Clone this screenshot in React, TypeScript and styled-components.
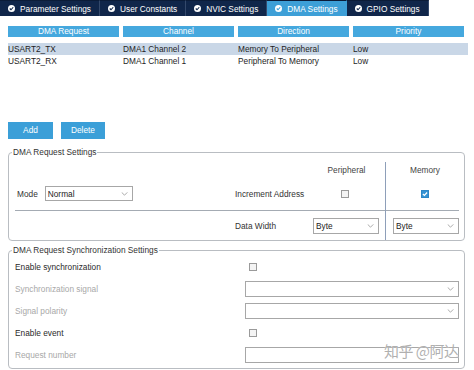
import React from 'react';
import styled, {createGlobalStyle} from "styled-components";

const GlobalStyle = createGlobalStyle`
  html, body {
    margin: 0;
    padding: 0;
    background: #fff;
  }

  body {
    font-family: "Liberation Sans", Arial, sans-serif;
    font-size: 8.3px;
    color: #222;
  }
`

const Page = styled.div`
  position: relative;
  width: 474px;
  height: 370px;
  overflow: hidden;
  background: #fff;
`

const TabBar = styled.div`
  display: flex;
  height: 16px;
`

const Tab = styled.div<{ $active?: boolean }>`
  display: flex;
  align-items: center;
  gap: 5px;
  padding: 0 8px;
  height: 100%;
  color: #fff;
  white-space: nowrap;
  background: ${p => p.$active ? '#3d9fd7' : '#10264a'};
  border-right: 1px solid ${p => p.$active ? '#3d9fd7' : '#34496b'};
  border-top: 1px solid #0b1c38;
  box-sizing: border-box;
`

const TabIcon = styled.span<{ $active?: boolean }>`
  display: flex;
  align-items: center;
  justify-content: center;
  width: 7px;
  height: 7px;
  border-radius: 50%;
  background: #fff;

  svg {
    width: 5px;
    height: 5px;
    stroke: ${p => p.$active ? '#3d9fd7' : '#10264a'};
  }
`

const Table = styled.div`
  display: grid;
  grid-template-columns: repeat(4, 111px);
  column-gap: 4px;
  margin: 10px 0 0 8px;
  width: 457px;
`

const HeadCell = styled.div`
  height: 11px;
  line-height: 11px;
  background: #45a8de;
  color: #fff;
  text-align: center;
  margin-bottom: 6px;
`

const Row = styled.div<{ $striped?: boolean }>`
  display: contents;

  & > div {
    background: ${p => p.$striped ? '#c9d7e7' : '#fff'};
  }
`

const Cell = styled.div`
  height: 12px;
  line-height: 12px;
  white-space: nowrap;
  color: #1e1e1e;
  margin-right: -4px;
  padding-right: 4px;
`

const Buttons = styled.div`
  display: flex;
  gap: 8px;
  margin: 55px 0 0 8px;
`

const Button = styled.div<{ $width: number }>`
  width: ${p => p.$width}px;
  height: 17px;
  line-height: 17px;
  background: #3b9fd8;
  color: #fff;
  text-align: center;
`

const Group = styled.div<{ $top: number }>`
  margin: ${p => p.$top}px 9px 0 8px;
  border: 1px solid #b9bdc2;
  border-radius: 4px;
`

const Legend = styled.div`
  width: fit-content;
  margin: -6px 0 0 3px;
  padding: 0 1px;
  height: 10px;
  line-height: 10px;
  background: #fff;
  color: #333;
`

const RequestGrid = styled.div`
  display: grid;
  grid-template-columns: 226px 77px 73px 1px 78px;
  grid-template-rows: 15px 33px 1px 29px;
  margin-top: 5px;
  align-items: center;
`

const VLine = styled.div`
  grid-column: 4;
  grid-row: 1 / 5;
  align-self: stretch;
  background: #8e9fb9;
`

const HLine = styled.div`
  grid-column: 1 / -1;
  grid-row: 3;
  height: 1px;
  margin: 0 5px 0 6px;
  background: #a4abb3;
`

const ColHead = styled.div<{ $col: number; $shift?: number }>`
  grid-column: ${p => p.$col};
  grid-row: 1;
  text-align: center;
  color: #444;
  padding-right: ${p => p.$shift || 0}px;
`

const Field = styled.div<{ $col: number; $row: number; $pad?: number }>`
  grid-column: ${p => p.$col};
  grid-row: ${p => p.$row};
  display: flex;
  align-items: center;
  gap: 7px;
  padding-left: ${p => p.$pad || 0}px;
  white-space: nowrap;
  color: #333;
`

const CheckCell = styled.div<{ $col: number; $shift?: number }>`
  grid-column: ${p => p.$col};
  grid-row: 2;
  display: flex;
  justify-content: center;
  padding-right: ${p => p.$shift || 0}px;
`

const Box = styled.span<{ $checked?: boolean }>`
  display: flex;
  align-items: center;
  justify-content: center;
  width: 8px;
  height: 8px;
  box-sizing: border-box;
  border: 1px solid ${p => p.$checked ? '#2c86c6' : '#9a9a9a'};
  background: ${p => p.$checked ? '#3593d3' : '#f4f4f4'};

  svg {
    width: 6px;
    height: 6px;
  }
`

const SelectBox = styled.div<{ $width?: number; $height?: number }>`
  display: flex;
  align-items: center;
  justify-content: space-between;
  box-sizing: border-box;
  width: ${p => p.$width ? `${p.$width}px` : '100%'};
  height: ${p => p.$height || 16}px;
  padding: 0 4px 0 2px;
  border: 1px solid #a7a7a7;
  background: #fff;
  color: #222;

  svg {
    width: 7px;
    height: 4px;
  }
`

const SyncGrid = styled.div`
  display: grid;
  grid-template-columns: 236px 214px;
  grid-auto-rows: 22px;
  align-items: center;
  margin: 1px 0 2px;
`

const SyncLabel = styled.div<{ $disabled?: boolean }>`
  padding-left: 6px;
  color: ${p => p.$disabled ? '#a8a8a8' : '#2a2a2a'};
`

const SyncControl = styled.div`
  display: flex;
  align-items: center;

  & > span {
    margin-left: 4px;
  }
`

const Watermark = styled.div`
  position: absolute;
  left: 384px;
  top: 340px;
  font-family: "Noto Sans CJK SC", sans-serif;
  font-size: 15px;
  letter-spacing: -0.5px;
  color: rgba(150, 150, 150, 0.75);
  text-shadow: 0 0 1px #fff;
  white-space: nowrap;
`

const Check: React.FC = () => (
  <svg viewBox="0 0 10 10" fill="none" strokeWidth={2.2}>
    <polyline points="1.5,5 4,7.5 8.5,2.5"/>
  </svg>
)

const Chevron: React.FC = () => (
  <svg viewBox="0 0 8 5" fill="none" stroke="#8a8a8a" strokeWidth={0.9}>
    <polyline points="0.5,0.5 4,4 7.5,0.5"/>
  </svg>
)

const Checkbox: React.FC<{ checked?: boolean }> = ({checked}) => (
  <Box $checked={checked}>
    {checked && (
      <svg viewBox="0 0 10 10" fill="none" stroke="#fff" strokeWidth={2}>
        <polyline points="1.5,5 4,7.5 8.5,2.5"/>
      </svg>
    )}
  </Box>
)

const Select: React.FC<{ value?: string; width?: number; height?: number }> = ({value, width, height}) => (
  <SelectBox $width={width} $height={height}>
    <span>{value}</span>
    <Chevron/>
  </SelectBox>
)

const tabs = ['Parameter Settings', 'User Constants', 'NVIC Settings', 'DMA Settings', 'GPIO Settings']

const requests = [
  ['USART2_TX', 'DMA1 Channel 2', 'Memory To Peripheral', 'Low'],
  ['USART2_RX', 'DMA1 Channel 1', 'Peripheral To Memory', 'Low'],
]

const App: React.FC = () => {
  return (
    <Page>
      <GlobalStyle/>
      <TabBar>
        {tabs.map(t => (
          <Tab key={t} $active={t === 'DMA Settings'}>
            <TabIcon $active={t === 'DMA Settings'}><Check/></TabIcon>
            {t}
          </Tab>
        ))}
      </TabBar>

      <Table>
        {['DMA Request', 'Channel', 'Direction', 'Priority'].map(h => (
          <HeadCell key={h}>{h}</HeadCell>
        ))}
        {requests.map((r, i) => (
          <Row key={r[0]} $striped={i === 0}>
            {r.map((c, j) => (
              <Cell key={j}>{c}</Cell>
            ))}
          </Row>
        ))}
      </Table>

      <Buttons>
        <Button $width={45}>Add</Button>
        <Button $width={44}>Delete</Button>
      </Buttons>

      <Group $top={13}>
        <Legend>DMA Request Settings</Legend>
        <RequestGrid>
          <ColHead $col={3} $shift={4}>Peripheral</ColHead>
          <ColHead $col={5}>Memory</ColHead>

          <Field $col={1} $row={2} $pad={8}>
            Mode
            <Select value="Normal" width={88} height={15}/>
          </Field>
          <Field $col={2} $row={2}>Increment Address</Field>
          <CheckCell $col={3} $shift={8}><Checkbox/></CheckCell>
          <CheckCell $col={5}><Checkbox checked/></CheckCell>

          <HLine/>

          <Field $col={2} $row={4}>Data Width</Field>
          <Field $col={3} $row={4} $pad={1}><Select value="Byte" width={66}/></Field>
          <Field $col={5} $row={4} $pad={7}><Select value="Byte" width={66}/></Field>

          <VLine/>
        </RequestGrid>
      </Group>

      <Group $top={9}>
        <Legend>DMA Request Synchronization Settings</Legend>
        <SyncGrid>
          <SyncLabel>Enable synchronization</SyncLabel>
          <SyncControl><Checkbox/></SyncControl>
          <SyncLabel $disabled>Synchronization signal</SyncLabel>
          <SyncControl><Select/></SyncControl>
          <SyncLabel $disabled>Signal polarity</SyncLabel>
          <SyncControl><Select/></SyncControl>
          <SyncLabel>Enable event</SyncLabel>
          <SyncControl><Checkbox/></SyncControl>
          <SyncLabel $disabled>Request number</SyncLabel>
          <SyncControl><SelectBox/></SyncControl>
        </SyncGrid>
      </Group>

      <Watermark>知乎 @阿达</Watermark>
    </Page>
  );
};

export default App;
